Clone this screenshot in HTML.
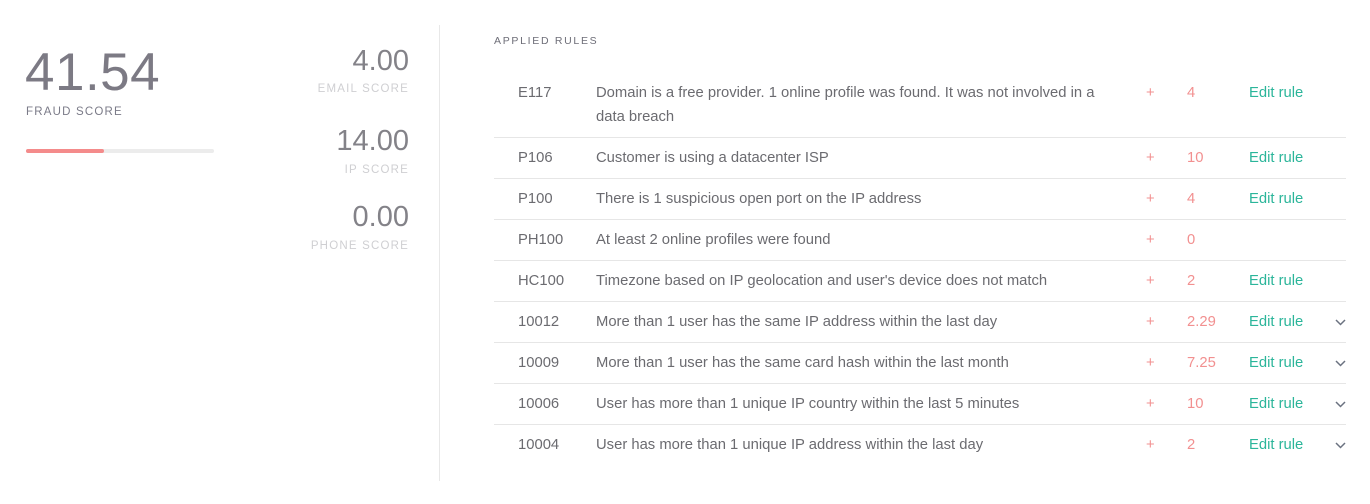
<!DOCTYPE html>
<html><head><style>
*{margin:0;padding:0;box-sizing:border-box}
body{width:1370px;height:504px;background:#fff;font-family:"Liberation Sans",sans-serif;position:relative;overflow:hidden;color:#6e6e72}
.a{position:absolute;white-space:nowrap}
.big{left:25px;top:42px;font-size:53px;color:#7c7a84;font-weight:300;letter-spacing:0.5px}
.lbl{font-size:11.5px;letter-spacing:1.2px}
.sc{right:961px;font-size:29px;color:#838288;text-align:right}
.sl{right:961px;font-size:11.5px;letter-spacing:1.2px;color:#cfcfd2;text-align:right}
.div{left:439px;top:25px;width:1px;height:456px;background:#e8e8e8}
.row{position:absolute;left:494px;width:852px;border-bottom:1px solid #e6e6e6;font-size:14.8px;color:#6b6b70}
.row span{position:absolute;line-height:24px}
.c1{left:24px}.c2{left:102px;width:520px;white-space:normal}
.c3{left:652px;color:#f29090}.c4{left:693px;color:#f29090}.c5{left:755px;color:#2bb59a}
</style></head><body>
<div class="a big">41.54</div>
<div class="a lbl" style="left:26px;top:106px;color:#7b7b88">FRAUD SCORE</div>
<div class="a" style="left:26px;top:149px;width:188px;height:4px;background:#ececec;border-radius:2px"></div>
<div class="a" style="left:26px;top:149px;width:78px;height:4px;background:#f48b8b;border-radius:2px"></div>
<div class="a sc" style="top:45px">4.00</div>
<div class="a sl" style="top:83px">EMAIL SCORE</div>
<div class="a sc" style="top:125px">14.00</div>
<div class="a sl" style="top:164px">IP SCORE</div>
<div class="a sc" style="top:201px">0.00</div>
<div class="a sl" style="top:240px">PHONE SCORE</div>
<div class="a div"></div>
<div class="a" style="left:494px;top:35px;font-size:10.5px;letter-spacing:1.7px;color:#6e6e78">APPLIED RULES</div>

<div class="row" style="top:68px;height:70px"><span class="c1" style="top:13px">E117</span><span class="c2" style="top:13px">Domain is a free provider. 1 online profile was found. It was not involved in a data breach</span><span class="c3" style="top:13px">+</span><span class="c4" style="top:13px">4</span><span class="c5" style="top:13px">Edit rule</span></div>
<div class="row" style="top:138px;height:41px"><span class="c1" style="top:8px">P106</span><span class="c2" style="top:8px">Customer is using a datacenter ISP</span><span class="c3" style="top:8px">+</span><span class="c4" style="top:8px">10</span><span class="c5" style="top:8px">Edit rule</span></div>
<div class="row" style="top:179px;height:41px"><span class="c1" style="top:8px">P100</span><span class="c2" style="top:8px">There is 1 suspicious open port on the IP address</span><span class="c3" style="top:8px">+</span><span class="c4" style="top:8px">4</span><span class="c5" style="top:8px">Edit rule</span></div>
<div class="row" style="top:220px;height:41px"><span class="c1" style="top:8px">PH100</span><span class="c2" style="top:8px">At least 2 online profiles were found</span><span class="c3" style="top:8px">+</span><span class="c4" style="top:8px">0</span></div>
<div class="row" style="top:261px;height:41px"><span class="c1" style="top:8px">HC100</span><span class="c2" style="top:8px">Timezone based on IP geolocation and user's device does not match</span><span class="c3" style="top:8px">+</span><span class="c4" style="top:8px">2</span><span class="c5" style="top:8px">Edit rule</span></div>
<div class="row" style="top:302px;height:41px"><span class="c1" style="top:8px">10012</span><span class="c2" style="top:8px">More than 1 user has the same IP address within the last day</span><span class="c3" style="top:8px">+</span><span class="c4" style="top:8px">2.29</span><span class="c5" style="top:8px">Edit rule</span><svg class="a" style="left:841px;top:17px" width="11" height="7" viewBox="0 0 11 7"><path d="M1 1l4.5 4.5L10 1" stroke="#6b7280" stroke-width="1.5" fill="none"/></svg></div>
<div class="row" style="top:343px;height:41px"><span class="c1" style="top:8px">10009</span><span class="c2" style="top:8px">More than 1 user has the same card hash within the last month</span><span class="c3" style="top:8px">+</span><span class="c4" style="top:8px">7.25</span><span class="c5" style="top:8px">Edit rule</span><svg class="a" style="left:841px;top:17px" width="11" height="7" viewBox="0 0 11 7"><path d="M1 1l4.5 4.5L10 1" stroke="#6b7280" stroke-width="1.5" fill="none"/></svg></div>
<div class="row" style="top:384px;height:41px"><span class="c1" style="top:8px">10006</span><span class="c2" style="top:8px">User has more than 1 unique IP country within the last 5 minutes</span><span class="c3" style="top:8px">+</span><span class="c4" style="top:8px">10</span><span class="c5" style="top:8px">Edit rule</span><svg class="a" style="left:841px;top:17px" width="11" height="7" viewBox="0 0 11 7"><path d="M1 1l4.5 4.5L10 1" stroke="#6b7280" stroke-width="1.5" fill="none"/></svg></div>
<div class="row" style="top:425px;height:41px;border-bottom:none"><span class="c1" style="top:8px">10004</span><span class="c2" style="top:8px">User has more than 1 unique IP address within the last day</span><span class="c3" style="top:8px">+</span><span class="c4" style="top:8px">2</span><span class="c5" style="top:8px">Edit rule</span><svg class="a" style="left:841px;top:17px" width="11" height="7" viewBox="0 0 11 7"><path d="M1 1l4.5 4.5L10 1" stroke="#6b7280" stroke-width="1.5" fill="none"/></svg></div>
</body></html>
